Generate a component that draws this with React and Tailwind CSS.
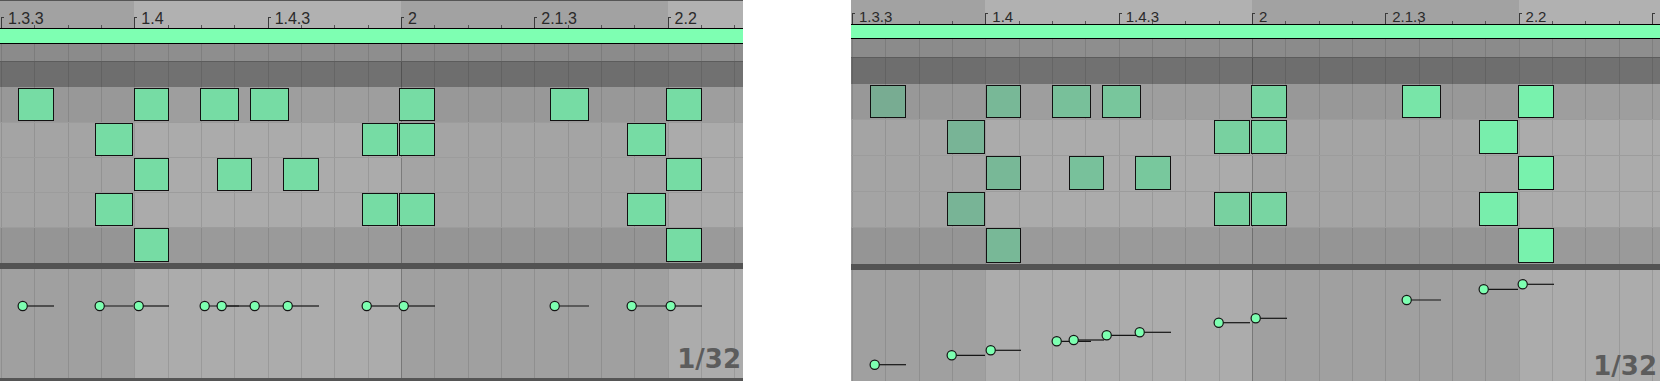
import React from "react";

// beat shading across the visible bars: 0 = darker beat, 1 = lighter beat
const BEATS = [0, 1, 1, 0, 0, 1, 1];
const CELLS = [0, 1, 2, 3];
const LABELS = ["1.3.3", "1.4", "1.4.3", "2", "2.1.3", "2.2", ""];

// x0/x1 in px from the panel's left edge, rows 0..4 from top, vy = velocity y in the right panel
const NOTES = [
  { x0: 18, x1: 54, rows: [0], vy: 94.7 },
  { x0: 95, x1: 133, rows: [1, 3], vy: 85.3 },
  { x0: 134, x1: 169, rows: [0, 2, 4], vy: 80.3 },
  { x0: 200, x1: 239, rows: [0], vy: 71.3 },
  { x0: 217, x1: 252, rows: [2], vy: 70 },
  { x0: 250, x1: 289, rows: [0], vy: 65.3 },
  { x0: 283, x1: 319, rows: [2], vy: 62.3 },
  { x0: 362, x1: 398, rows: [1, 3], vy: 52.7 },
  { x0: 399, x1: 435, rows: [0, 1, 3], vy: 48.3 },
  { x0: 550, x1: 589, rows: [0], vy: 30 },
  { x0: 627, x1: 666, rows: [1, 3], vy: 19.3 },
  { x0: 666, x1: 702, rows: [0, 2, 4], vy: 14.3 },
];

const ROW_BG = [
  { dark: "bg-[#989898]", light: "bg-[#9e9e9e]" },
  { dark: "bg-[#a4a4a4]", light: "bg-[#ababab]" },
  { dark: "bg-[#a4a4a4]", light: "bg-[#ababab]" },
  { dark: "bg-[#a4a4a4]", light: "bg-[#ababab]" },
  { dark: "bg-[#959595]", light: "bg-[#9a9a9a]" },
];

const PANELS = [
  {
    width: "w-[743px]",
    ruler: "h-[28px] border-t border-[#555555]",
    label: "top-[10px] text-[16px]",
    loop: "h-[16px]",
    gray: "h-[17px]",
    dark: "h-[26px]",
    rows: [35, 35, 35, 35, 36],
    rowH: ["h-[35px]", "h-[35px]", "h-[35px]", "h-[35px]", "h-[36px]"],
    vel: "h-[109px]",
    velH: 109,
    bottom: "h-[3px] bg-[#555555]",
    shift: 0,
    fixedVy: 37,
    tag: "right-[2px] bottom-[6px]",
  },
  {
    width: "w-[809px]",
    ruler: "h-[24px]",
    label: "top-[9px] text-[15px]",
    loop: "h-[15px]",
    gray: "h-[18px]",
    dark: "h-[27px]",
    rows: [35, 36, 36, 36, 37],
    rowH: ["h-[35px]", "h-[36px]", "h-[36px]", "h-[36px]", "h-[37px]"],
    vel: "h-[111px]",
    velH: 111,
    bottom: "h-0",
    shift: 1,
    fixedVy: null,
    tag: "right-[3px] bottom-[2px]",
  },
];

const noteColor = (vy) => {
  if (vy == null) return "#76dca4";
  const t = 1 - vy / 108;
  return `rgb(120, ${Math.round(160 + 95 * t)}, ${Math.round(142 + 36 * t)})`;
};

function Lane({ className, dark, light }) {
  return (
    <div className={`flex flex-none overflow-hidden ${className}`}>
      <div className={`w-px flex-none ${dark}`} />
      {BEATS.map((b, i) => (
        <div key={i} className={`flex flex-none ${b ? light : dark}`}>
          {CELLS.map((c) => (
            <div
              key={c}
              className={`w-[33.333px] flex-none border-l ${
                i === 3 && c === 0 ? "border-black/25" : "border-black/10"
              }`}
            />
          ))}
        </div>
      ))}
    </div>
  );
}

function Ruler({ className, label }) {
  return (
    <div className={`flex flex-none overflow-hidden ${className}`}>
      <div className="w-px flex-none bg-[#a2a2a2]" />
      {BEATS.map((b, i) => (
        <div key={i} className={`relative flex flex-none items-end ${b ? "bg-[#b1b1b1]" : "bg-[#a2a2a2]"}`}>
          <div className="absolute bottom-0 left-0 h-[11px] w-[3px] border-l border-t border-[#3a3a3a]" />
          {LABELS[i] && (
            <span className={`absolute left-[7px] ${label} leading-none text-[#2a2a2a]`}>{LABELS[i]}</span>
          )}
          {CELLS.map((c) => (
            <div key={c} className="h-[3px] w-[33.333px] flex-none border-l border-[#555555]" />
          ))}
        </div>
      ))}
    </div>
  );
}

function Panel({ p }) {
  const tops = p.rows.map((_, i) => p.rows.slice(0, i).reduce((a, b) => a + b, 0));
  const vyOf = (n) => (p.fixedVy != null ? p.fixedVy : n.vy);

  return (
    <div className={`relative flex h-[381px] flex-none flex-col overflow-hidden bg-[#a4a4a4] ${p.width}`}>
      <Ruler className={p.ruler} label={p.label} />

      {/* loop brace */}
      <div className={`flex-none border-y border-black bg-[#7effb2] ${p.loop}`} />

      <Lane className={p.gray} dark="bg-[#8b8b8b]" light="bg-[#8e8e8e]" />
      <Lane className={`border-t border-[#5c5c5c] ${p.dark}`} dark="bg-[#6e6e6e]" light="bg-[#717171]" />

      {/* note rows */}
      <div className="relative flex flex-none flex-col bg-[#a6a6a6]">
        {ROW_BG.map((r, i) => (
          <Lane
            key={i}
            className={`${i > 0 ? "border-t border-black/[0.06]" : ""} ${p.rowH[i]}`}
            dark={r.dark}
            light={r.light}
          />
        ))}
        {NOTES.flatMap((n, k) =>
          n.rows.map((r) => (
            <div
              key={`${k}-${r}`}
              className="absolute border-[1.5px] border-[#111111]"
              style={{
                left: n.x0 + p.shift,
                top: tops[r] + 1,
                width: n.x1 - n.x0,
                height: p.rows[r] - 2,
                background: noteColor(p.fixedVy != null ? null : n.vy),
              }}
            />
          ))
        )}
      </div>

      <div className="h-[6px] flex-none bg-[#535353]" />

      {/* velocity lane */}
      <div className={`relative flex-none ${p.vel}`}>
        <Lane className="h-full" dark="bg-[#a0a0a0]" light="bg-[#acacac]" />
        <svg className="absolute inset-0" width="100%" height={p.velH}>
          {NOTES.map((n, k) => (
            <line
              key={k}
              x1={n.x0 + p.shift + 4.7}
              x2={n.x1 + p.shift}
              y1={vyOf(n)}
              y2={vyOf(n)}
              stroke="#151515"
              strokeWidth="1.2"
            />
          ))}
          {NOTES.map((n, k) => (
            <circle
              key={k}
              cx={n.x0 + p.shift + 4.7}
              cy={vyOf(n)}
              r="4.6"
              fill="#7dffb1"
              stroke="#151515"
              strokeWidth="1.2"
            />
          ))}
        </svg>
        <span
          className={`absolute ${p.tag} font-['DejaVu_Sans',sans-serif] text-[26px] font-bold leading-none text-[#5c5c5c]`}
        >
          1/32
        </span>
      </div>

      <div className={`flex-none ${p.bottom}`} />
    </div>
  );
}

export default function App() {
  return (
    <div className="flex h-[381px] w-[1660px] overflow-hidden bg-white font-['Liberation_Sans',Arial,sans-serif]">
      <Panel p={PANELS[0]} />
      <div className="w-[108px] flex-none" />
      <Panel p={PANELS[1]} />
    </div>
  );
}
